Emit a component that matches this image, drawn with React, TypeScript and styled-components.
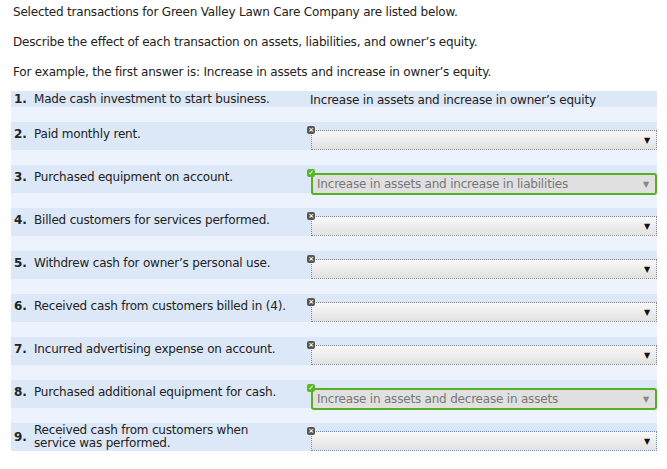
import React from "react";
import styled, { createGlobalStyle } from "styled-components";

const G = createGlobalStyle`
  body { margin: 0; background: #fff; font-family: "DejaVu Sans", Verdana, sans-serif; font-size: 12px; letter-spacing: -0.2px; color: #222; }
`;
const Page = styled.div`padding: 5px 10px 0 11px;`;
const P = styled.p`margin: 0 0 16px 2px; line-height: 14px;`;
const Table = styled.div`display: flex; flex-direction: column; margin-top: 2px; width: 646px;`;
const Row = styled.div<{ h: number; last?: boolean }>`
  display: grid; grid-template-columns: 296px 1fr; background: #dce7f7;
  height: ${p => p.h}px; margin-bottom: ${p => (p.last ? 0 : 15)}px;
  box-shadow: 0 15px 0 #ecf3fd;
`;
const Label = styled.div<{ two?: boolean }>`
  display: flex; align-items: ${p => (p.two ? "center" : "flex-start")};
  padding-top: ${p => (p.two ? 0 : 6)}px; padding-left: 3px; line-height: 13px;
`;
const Num = styled.b`width: 20px; flex: none;`;
const Answer = styled.div`padding-top: 2px; padding-left: 3px;`;
const Cell = styled.div`position: relative; padding: 8px 0 0 4px;`;
const Select = styled.div<{ ok?: boolean; focus?: boolean }>`
  height: 18px; display: flex; align-items: center; justify-content: space-between;
  padding: 0 6px 0 4px; font-size: 12px; color: #777;
  border: ${p => (p.ok ? "2px solid #55b022" : p.focus ? "1px dotted #6a8fd6" : "1px dotted #888")};
  border-radius: ${p => (p.ok ? 3 : 0)}px;
  background: ${p => (p.ok ? "#e0e0e0" : "linear-gradient(#f8f8f8, #e2e2e2)")};
`;
const Arrow = styled.span<{ ok?: boolean }>`font-size: 8px; color: ${p => (p.ok ? "#888" : "#111")};`;
const Mark = styled.div<{ ok?: boolean }>`
  position: absolute; left: 0; top: 4px; width: 8px; height: 8px; border-radius: 2px;
  background: ${p => (p.ok ? "#5ab52a" : "#555")}; color: #fff; font-size: 7px; line-height: 8px; text-align: center; font-weight: bold;
`;

const rows: [string, string | null][] = [
  ["Paid monthly rent.", null],
  ["Purchased equipment on account.", "Increase in assets and increase in liabilities"],
  ["Billed customers for services performed.", null],
  ["Withdrew cash for owner’s personal use.", null],
  ["Received cash from customers billed in (4).", null],
  ["Incurred advertising expense on account.", null],
  ["Purchased additional equipment for cash.", "Increase in assets and decrease in assets"],
];

export default function App() {
  return (
    <Page>
      <G />
      <P>Selected transactions for Green Valley Lawn Care Company are listed below.</P>
      <P>Describe the effect of each transaction on assets, liabilities, and owner’s equity.</P>
      <P style={{ marginBottom: 12 }}>For example, the first answer is: Increase in assets and increase in owner’s equity.</P>
      <Table>
        <Row h={16}>
          <Label style={{ paddingTop: 2 }}><Num>1.</Num>Made cash investment to start business.</Label>
          <Answer>Increase in assets and increase in owner’s equity</Answer>
        </Row>
        {rows.map(([t, a], i) => (
          <Row h={28} key={i}>
            <Label><Num>{i + 2}.</Num>{t}</Label>
            <Cell>
              <Mark ok={!!a}>{a ? "✓" : "×"}</Mark>
              <Select ok={!!a}><span>{a ?? ""}</span><Arrow ok={!!a}>▼</Arrow></Select>
            </Cell>
          </Row>
        ))}
        <Row h={28} last>
          <Label two><Num>9.</Num><span>Received cash from customers when<br />service was performed.</span></Label>
          <Cell>
            <Mark>×</Mark>
            <Select focus><span /><Arrow>▼</Arrow></Select>
          </Cell>
        </Row>
      </Table>
    </Page>
  );
}
